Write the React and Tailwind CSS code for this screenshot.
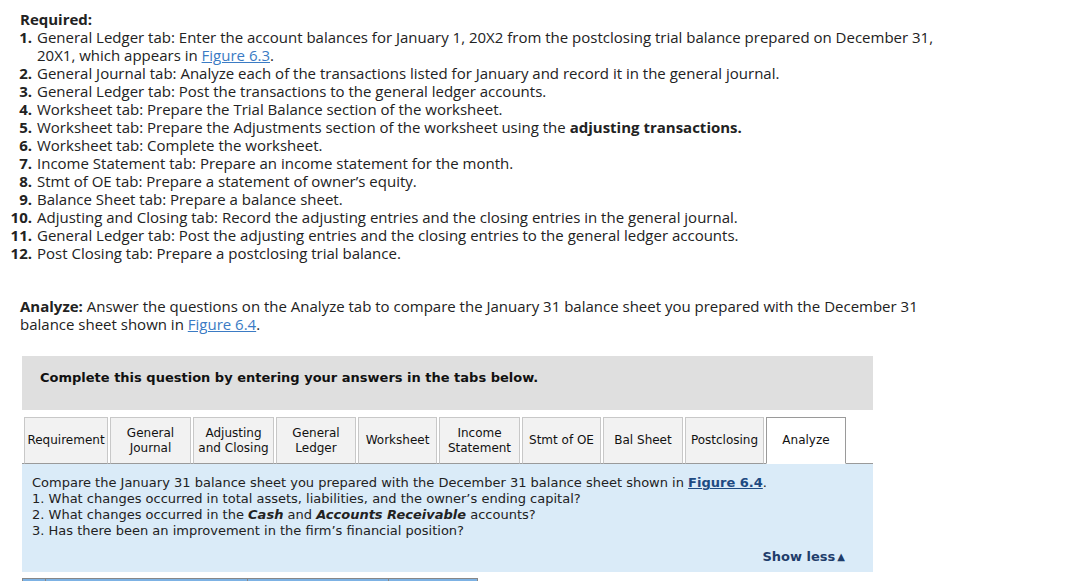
import { useState } from 'react'

const steps = [
  ['1.', <>General Ledger tab: Enter the account balances for January 1, 20X2 from the postclosing trial balance prepared on December 31, 20X1, which appears in <a href="#" className="text-[#3b7bc4] underline">Figure 6.3</a>.</>],
  ['2.', 'General Journal tab: Analyze each of the transactions listed for January and record it in the general journal.'],
  ['3.', 'General Ledger tab: Post the transactions to the general ledger accounts.'],
  ['4.', 'Worksheet tab: Prepare the Trial Balance section of the worksheet.'],
  ['5.', <>Worksheet tab: Prepare the Adjustments section of the worksheet using the <b>adjusting transactions.</b></>],
  ['6.', 'Worksheet tab: Complete the worksheet.'],
  ['7.', 'Income Statement tab: Prepare an income statement for the month.'],
  ['8.', 'Stmt of OE tab: Prepare a statement of owner’s equity.'],
  ['9.', 'Balance Sheet tab: Prepare a balance sheet.'],
  ['10.', 'Adjusting and Closing tab: Record the adjusting entries and the closing entries in the general journal.'],
  ['11.', 'General Ledger tab: Post the adjusting entries and the closing entries to the general ledger accounts.'],
  ['12.', 'Post Closing tab: Prepare a postclosing trial balance.'],
]

const tabs = [
  { label: 'Requirement', w: 'w-[84px]' },
  { label: ['General', 'Journal'], w: 'w-[81px]' },
  { label: ['Adjusting', 'and Closing'], w: 'w-[81px]' },
  { label: ['General', 'Ledger'], w: 'w-[80px]' },
  { label: 'Worksheet', w: 'w-[79px]' },
  { label: ['Income', 'Statement'], w: 'w-[81px]' },
  { label: 'Stmt of OE', w: 'w-[79px]' },
  { label: 'Bal Sheet', w: 'w-[80px]' },
  { label: 'Postclosing', w: 'w-[79px]' },
  { label: 'Analyze', w: 'w-[80px]' },
]

export default function App() {
  const [active, setActive] = useState(9)
  const [open, setOpen] = useState(true)

  return (
    <div className="bg-white min-h-[581px] overflow-hidden">
      <div className="pl-5 pt-[10px] w-[955px] font-['Open_Sans','Lato',sans-serif] text-[15px] leading-[18px] text-[#222]">
        <div className="font-bold">Required:</div>
        {steps.map(([n, text]) => (
          <div key={n} className="flex">
            <span className="w-[15px] shrink-0 text-right font-bold -ml-[3px] mr-[5px] whitespace-nowrap flex justify-end">{n}</span>
            <span>{text}</span>
          </div>
        ))}
        <p className="mt-[35px]">
          <b>Analyze:</b> Answer the questions on the Analyze tab to compare the January 31 balance sheet you prepared with the December 31 balance sheet shown in{' '}
          <a href="#" className="text-[#3b7bc4] underline">Figure 6.4</a>.
        </p>
      </div>

      <div className="ml-[22px] mt-[23px] w-[851px] font-['DejaVu_Sans','Verdana',sans-serif]">
        <div className="bg-[#dfdfdf] h-[54px] pl-[18px] pt-[14px] text-[13px] leading-[16px] font-bold text-[#111]">
          Complete this question by entering your answers in the tabs below.
        </div>

        <div className="mt-[7px] flex items-end gap-[2px] pl-[2px] border-b border-[#9a9a9a]">
          {tabs.map((t, i) => (
            <button
              key={i}
              type="button"
              onClick={() => setActive(i)}
              className={`${t.w} h-[47px] -mb-px flex flex-col items-center justify-center text-[12px] leading-[15px] text-[#111] border ${
                i === active ? 'bg-white border-[#9a9a9a] border-b-white' : 'bg-[#f2f2f2] border-[#c8c8c8] border-b-[#9a9a9a]'
              }`}
            >
              {Array.isArray(t.label) ? t.label.map((l) => <span key={l}>{l}</span>) : t.label}
            </button>
          ))}
        </div>

        <div className="bg-[#daebf8] h-[108px] pl-[10px] pt-[11px] text-[13px] leading-[16px] text-[#222]">
          <div>
            Compare the January 31 balance sheet you prepared with the December 31 balance sheet shown in{' '}
            <a href="#" className="font-bold text-[#1e4a82] underline">Figure 6.4</a>.
          </div>
          <div>1. What changes occurred in total assets, liabilities, and the owner’s ending capital?</div>
          <div>
            2. What changes occurred in the <b><i>Cash</i></b> and <b><i>Accounts Receivable</i></b> accounts?
          </div>
          <div>3. Has there been an improvement in the firm’s financial position?</div>
          <div className="flex justify-end pr-[28px] mt-[10px]">
            <button type="button" onClick={() => setOpen(!open)} className="font-bold text-[#1f3d6b] text-[13px] flex items-center">
              Show less<span className="text-[10px] ml-[2px]">▲</span>
            </button>
          </div>
        </div>

        <div className="mt-[6px] flex w-[456px] h-[12px] border border-[#888] bg-[#7db2e4]">
          <div className="w-[23px] border-r border-[#888]" />
          <div className="w-[202px] border-r border-[#888]" />
          <div className="w-[141px] border-r border-[#888]" />
          <div className="flex-1" />
        </div>
      </div>
    </div>
  )
}
